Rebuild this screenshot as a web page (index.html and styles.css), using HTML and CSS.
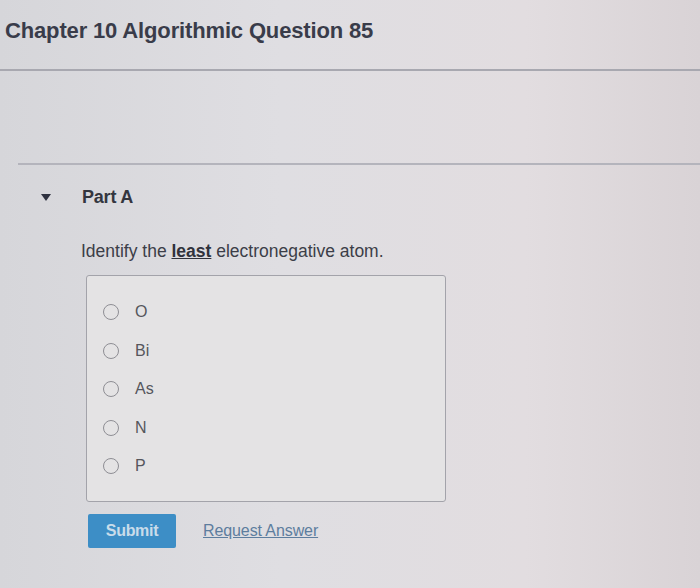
FILE: index.html
```html
<!DOCTYPE html>
<html>
<head>
<meta charset="utf-8">
<link rel="stylesheet" href="styles.css">
</head>
<body>
<div class="page">
  <header class="head">
    <h1 class="title">Chapter 10 Algorithmic Question 85</h1>
  </header>
  <section class="part">
    <div class="part-head">
      <span class="tri"></span>
      <span class="part-title">Part A</span>
    </div>
    <p class="question">Identify the <b>least</b> electronegative atom.</p>
    <div class="choices">
      <label class="choice"><span class="radio"></span><span>O</span></label>
      <label class="choice"><span class="radio"></span><span>Bi</span></label>
      <label class="choice"><span class="radio"></span><span>As</span></label>
      <label class="choice"><span class="radio"></span><span>N</span></label>
      <label class="choice"><span class="radio"></span><span>P</span></label>
    </div>
    <div class="actions">
      <button class="submit">Submit</button>
      <a class="request" href="#">Request Answer</a>
    </div>
  </section>
</div>
</body>
</html>
```

FILE: styles.css
```css
html, body {
  margin: 0;
  padding: 0;
}
body {
  width: 700px;
  height: 588px;
  overflow: hidden;
  font-family: "Liberation Sans", Arial, sans-serif;
  background: linear-gradient(90deg, #d6d6da 0%, #dfdee2 40%, #e2dde0 75%, #d9d3d6 100%);
}
.page {
  height: 588px;
}
.head {
  height: 69px;
  border-bottom: 2px solid #a8a8b0;
}
.title {
  margin: 0;
  padding: 17px 0 0 5px;
  font-size: 22px;
  line-height: 28px;
  font-weight: bold;
  color: #393c4a;
  letter-spacing: -0.15px;
}
.part {
  margin: 92px 0 0 18px;
  border-top: 2px solid #b4b4bc;
  padding-top: 21px;
}
.part-head {
  display: flex;
  align-items: center;
  height: 22px;
}
.tri {
  width: 0;
  height: 0;
  border-left: 5px solid transparent;
  border-right: 5px solid transparent;
  border-top: 7px solid #2f3240;
  margin-left: 23px;
}
.part-title {
  margin-left: 31px;
  font-size: 18px;
  font-weight: bold;
  color: #34363f;
  letter-spacing: -0.2px;
}
.question {
  margin: 33px 0 0 63px;
  font-size: 17.5px;
  line-height: 20px;
  color: #3c3e48;
  letter-spacing: 0;
}
.question b {
  text-decoration: underline;
  color: #30323c;
}
.choices {
  margin: 14px 0 0 68px;
  width: 360px;
  height: 227px;
  border: 1px solid #a3a3aa;
  border-radius: 3px;
  background: #e4e3e4;
  padding-top: 27px;
  box-sizing: border-box;
  display: flex;
  flex-direction: column;
  gap: 20.5px;
}
.choice {
  display: flex;
  align-items: center;
  height: 18px;
  font-size: 16px;
  color: #55565c;
}
.radio {
  width: 14px;
  height: 14px;
  border: 1.5px solid #8e8e94;
  border-radius: 50%;
  margin-left: 16px;
  margin-right: 16px;
}
.actions {
  display: flex;
  align-items: center;
  margin: 12px 0 0 70px;
}
.submit {
  width: 88px;
  height: 34px;
  border: none;
  border-radius: 2px;
  background: #3d8ec6;
  color: #c9dcea;
  font-family: "Liberation Sans", Arial, sans-serif;
  font-size: 16px;
  font-weight: bold;
  letter-spacing: -0.3px;
  padding: 0;
}
.request {
  margin-left: 27px;
  font-size: 16px;
  color: #5d7d9e;
  text-decoration: underline;
  letter-spacing: -0.1px;
}
```
